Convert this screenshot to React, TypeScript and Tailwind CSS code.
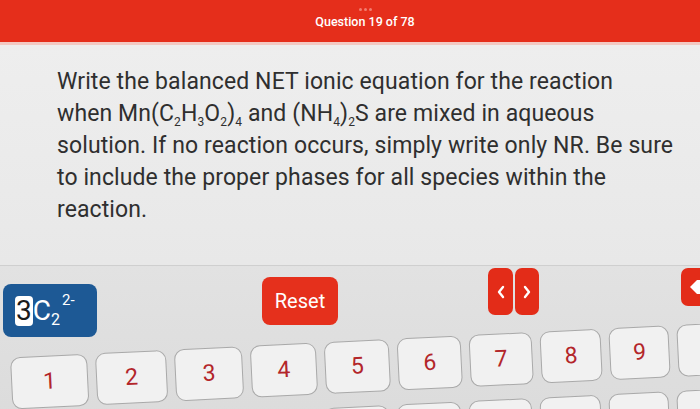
const keyWidths = [
  "w-[77px]",
  "w-[71px]",
  "w-[68px]",
  "w-[66px]",
  "w-[65px]",
  "w-[64px]",
  "w-[63px]",
  "w-[61px]",
  "w-[60px]",
  "w-[60px]",
];

const keys = ["1", "2", "3", "4", "5", "6", "7", "8", "9", "0"];

function Sub({ children }: { children: string }) {
  return <span className="text-[12px] relative top-[5px] leading-none">{children}</span>;
}

function Chevron({ dir }: { dir: "left" | "right" }) {
  return (
    <svg width="10" height="14" viewBox="0 0 10 14" fill="none">
      <path
        d={dir === "left" ? "M7 2 L3 7 L7 12" : "M3 2 L7 7 L3 12"}
        stroke="white"
        strokeWidth="2.4"
        strokeLinecap="round"
        strokeLinejoin="round"
      />
    </svg>
  );
}

export default function App() {
  return (
    <div
      className="w-[700px] h-[409px] overflow-hidden flex flex-col bg-[#e9e9e9] text-[#2e2e2e]"
      style={{ fontFamily: "Roboto, 'Liberation Sans', sans-serif" }}
    >
      {/* header */}
      <div className="h-[42px] shrink-0 bg-[#e52e1b] flex flex-col items-center pl-[30px] pt-[6px]">
        <div className="flex gap-[2px] h-[6px] items-center">
          <span className="w-[3px] h-[3px] rounded-full bg-[#f27d70]" />
          <span className="w-[3px] h-[3px] rounded-full bg-[#f27d70]" />
          <span className="w-[3px] h-[3px] rounded-full bg-[#f27d70]" />
        </div>
        <div className="text-white text-[12.5px] leading-[16px] mt-[2px] font-medium">Question 19 of 78</div>
      </div>
      <div className="h-[3px] shrink-0 bg-[#f3c9c3]" />

      {/* question */}
      <div className="h-[220px] shrink-0 bg-gradient-to-b from-[#eeeeee] to-[#e8e8e8] pl-[57px] pt-[21px]">
        <p className="text-[23px] leading-[32px] tracking-[0.1px] text-[#2f2f2f] whitespace-nowrap">
          Write the balanced NET ionic equation for the reaction
          <br />
          when Mn(C<Sub>2</Sub>H<Sub>3</Sub>O<Sub>2</Sub>)<Sub>4</Sub> and (NH<Sub>4</Sub>)<Sub>2</Sub>S are
          mixed in aqueous
          <br />
          solution. If no reaction occurs, simply write only NR. Be sure
          <br />
          to include the proper phases for all species within the
          <br />
          reaction.
        </p>
      </div>
      <div className="h-px shrink-0 bg-[#cfcfcf]" />

      {/* answer / controls */}
      <div className="flex-1 bg-gradient-to-b from-[#e2e2e2] to-[#d9d9d9]">
        <div className="flex items-start h-[72px]">
          <div className="ml-[3px] mt-[18px] w-[94px] h-[53px] shrink-0 rounded-[8px] bg-[#1d5995] flex items-center pl-[12px] text-white">
            <span className="bg-white text-[#1b1b1b] rounded-[4px] px-[1px] text-[28px] leading-[30px]">3</span>
            <span className="text-[28px] leading-[30px]">C</span>
            <span className="text-[16px] leading-none relative top-[9px]">2</span>
            <span className="text-[15px] leading-none relative -top-[10px] left-[2px]">2-</span>
          </div>
          <div className="ml-[165px] mt-[11px] w-[76px] h-[48px] shrink-0 rounded-[8px] bg-[#e5301c] flex items-center justify-center text-white text-[20px]">
            Reset
          </div>
          <div className="ml-[150px] mt-[2px] flex gap-[2px] shrink-0">
            <div className="w-[25px] h-[47px] rounded-[7px] bg-[#e32c18] flex items-center justify-center">
              <Chevron dir="left" />
            </div>
            <div className="w-[24px] h-[47px] rounded-[7px] bg-[#e32c18] flex items-center justify-center">
              <Chevron dir="right" />
            </div>
          </div>
          <div className="ml-[142px] mt-[2px] w-[40px] h-[38px] shrink-0 rounded-l-[7px] bg-[#e32c18] flex items-center pl-[9px]">
            <svg width="16" height="16" viewBox="0 0 16 16">
              <path d="M0 8 L7 1 H16 V15 H7 Z" fill="white" />
            </svg>
          </div>
        </div>

        <div className="flex gap-[8px] pl-[10px] mt-[20px] origin-top-left -rotate-[2.8deg]">
          {keys.map((k, i) => (
            <div
              key={k}
              className={`${keyWidths[i]} h-[52px] shrink-0 rounded-[10px] border border-[#a9a9a9] bg-[#f1f1f1] flex items-center justify-center text-[23px] text-[#b3262a]`}
            >
              {k}
            </div>
          ))}
        </div>
        <div className="flex gap-[8px] pl-[10px] mt-[14px] origin-top-left -rotate-[2.8deg]">
          {keys.map((k, i) => (
            <div
              key={k}
              className={`${keyWidths[i]} h-[52px] shrink-0 rounded-[10px] border border-[#a9a9a9] bg-[#f1f1f1]`}
            />
          ))}
        </div>
      </div>
    </div>
  );
}
